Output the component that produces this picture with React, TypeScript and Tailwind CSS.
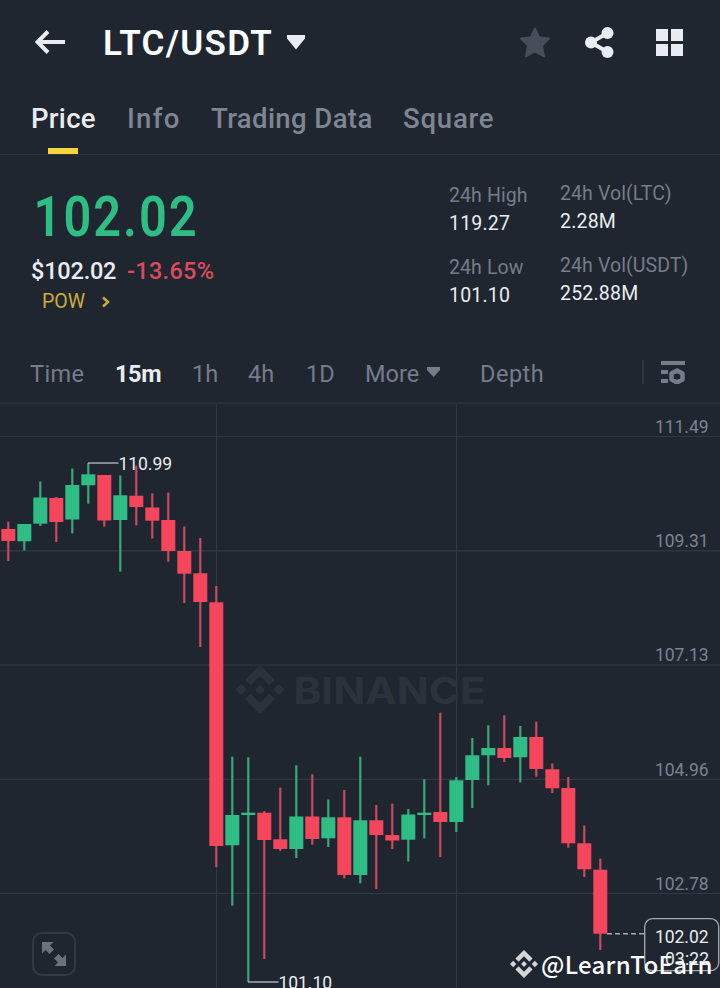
import React from "react";
import clsx from "clsx";


interface ICandle {
    high: number,
    top: number,
    bottom: number,
    low: number,
    up?: boolean,
}

const CANDLES: Array<ICandle> = [
    { high: 521.7, top: 529, bottom: 541, low: 561 },
    { high: 524, top: 524, bottom: 541.3, low: 550.5, up: true },
    { high: 481.5, top: 497.5, bottom: 523.7, low: 526, up: true },
    { high: 497, top: 498, bottom: 522, low: 542 },
    { high: 468.5, top: 485, bottom: 519.5, low: 533.3, up: true },
    { high: 463, top: 474.3, bottom: 485.3, low: 503.7, up: true },
    { high: 475, top: 475, bottom: 520.5, low: 526.7 },
    { high: 475.5, top: 495.3, bottom: 520, low: 571.7, up: true },
    { high: 465.7, top: 495.7, bottom: 507, low: 525.3 },
    { high: 493.3, top: 507.5, bottom: 520.7, low: 538.5 },
    { high: 492.5, top: 520, bottom: 551, low: 561.7 },
    { high: 526.5, top: 551, bottom: 573.7, low: 603 },
    { high: 538, top: 573.3, bottom: 602, low: 647 },
    { high: 586, top: 602.3, bottom: 846, low: 867 },
    { high: 756.7, top: 815, bottom: 845.3, low: 905.7, up: true },
    { high: 757.3, top: 812.7, bottom: 815, low: 982, up: true },
    { high: 811, top: 812.7, bottom: 840, low: 959 },
    { high: 787.7, top: 839.3, bottom: 849, low: 851 },
    { high: 765.3, top: 816.5, bottom: 849, low: 858, up: true },
    { high: 774.3, top: 816.5, bottom: 839, low: 844.7 },
    { high: 799.5, top: 817.3, bottom: 838.3, low: 847, up: true },
    { high: 790, top: 817.3, bottom: 875, low: 878.3 },
    { high: 756.7, top: 820.3, bottom: 875, low: 883.3, up: true },
    { high: 805, top: 820.3, bottom: 835, low: 889 },
    { high: 803.7, top: 835, bottom: 840.5, low: 849 },
    { high: 809, top: 814.5, bottom: 839.7, low: 861.5, up: true },
    { high: 779.3, top: 812.7, bottom: 815, low: 838.3, up: true },
    { high: 712.7, top: 812, bottom: 822, low: 857 },
    { high: 777, top: 780.3, bottom: 822, low: 832, up: true },
    { high: 738, top: 755.3, bottom: 780, low: 808, up: true },
    { high: 725.3, top: 748, bottom: 755.3, low: 785.3, up: true },
    { high: 715.3, top: 748, bottom: 758, low: 762 },
    { high: 726, top: 737, bottom: 757.3, low: 782.5, up: true },
    { high: 721.7, top: 737, bottom: 769, low: 776.7 },
    { high: 763.5, top: 769.3, bottom: 788.3, low: 793 },
    { high: 777, top: 788, bottom: 843.3, low: 847.7 },
    { high: 825.5, top: 843.3, bottom: 869.3, low: 877 },
    { high: 858.7, top: 869.7, bottom: 933.7, low: 950 },
];

const AXIS = [
    { y: 436.5, label: "111.49" },
    { y: 550.8, label: "109.31" },
    { y: 665, label: "107.13" },
    { y: 779.3, label: "104.96" },
    { y: 893.5, label: "102.78" },
];

const TABS = [
    { name: "Price", box: "w-[96px]", text: "text-[#eaecef] tracking-[0.3px]" },
    { name: "Info", box: "w-[84px]", text: "tracking-[1.3px]" },
    { name: "Trading Data", box: "w-[192px]", text: "tracking-[0.4px]" },
    { name: "Square", box: "w-[120px]", text: "tracking-[0.8px]" },
];

const INTERVALS = [
    { name: "Time", box: "w-[85px]", text: "tracking-[0.4px]" },
    { name: "15m", box: "w-[77px]", text: "text-[#eaecef] font-bold tracking-[-0.4px]" },
    { name: "1h", box: "w-[56px]", text: "" },
    { name: "4h", box: "w-[58px]", text: "" },
    { name: "1D", box: "w-[59px]", text: "" },
];

function BinanceLogo(props: React.SVGProps<SVGSVGElement>) {
    return (
        <svg viewBox="0 0 24 24" fill="currentColor" {...props}>
            <path d="M16.62 13.92l2.72 2.72L12 24l-7.36-7.36 2.72-2.72L12 18.58zM21.26 9.28L24 12l-2.72 2.72L18.57 12zM12 9.5l2.5 2.5-2.5 2.5L9.5 12zM2.72 9.28L5.41 12l-2.69 2.69L0 12zM12 0l7.34 7.34-2.72 2.72L12 5.42l-4.64 4.66-2.72-2.72z" />
        </svg>
    )
}

function Header() {
    return (
        <header className="flex items-center h-[84px] pl-[35px] pr-[36px] text-[#eaecf4]">
            <svg className="w-[31px] h-6" viewBox="0 0 31 24" fill="none" stroke="currentColor" strokeWidth="4">
                <path d="M2 12H30M13 1.500L2.500 12L13 22.500" />
            </svg>
            <h1 className="ml-[37px] pt-1 w-[170px] whitespace-nowrap text-[35px] leading-[42px] font-semibold tracking-[1.300px] text-[#fcfdff]">LTC/USDT</h1>
            <svg className="ml-[14px] w-[18px] h-[15px]" viewBox="0 0 18 15" fill="currentColor">
                <path d="M0 0H18V3.500L9 14.500L0 3.500Z" />
            </svg>
            <div className="flex items-center ml-auto">
                <svg className="w-[30px] h-[31px]" viewBox="0 0 30 31" fill="#474d59" stroke="#474d59" strokeWidth="2" strokeLinejoin="round">
                    <path d="M15 1.500L19 10.200L29 11.500L22 18.500L24 29.500L15 24.500L6 29.500L8 18.500L1 11.500L11 10.200Z" />
                </svg>
                <svg className="ml-[35px] w-[29px] h-[31px]" viewBox="0 0 29 31" fill="currentColor">
                    <path d="M22.500 6L6 15.500L22.500 25" fill="none" stroke="currentColor" strokeWidth="4" />
                    <circle cx="22.500" cy="6" r="6" />
                    <circle cx="6" cy="15.500" r="6" />
                    <circle cx="22.500" cy="25" r="6" />
                </svg>
                <svg className="ml-[42px] mr-px w-[27px] h-[27px]" viewBox="0 0 27 27" fill="currentColor">
                    <path d="M0 0H12V12H0zM15 0H27V12H15zM0 15H12V27H0zM15 15H27V27H15z" />
                </svg>
            </div>
        </header>
    )
}

function Tabs() {
    return (
        <nav className="flex h-[71px] pl-[31px] border-b border-[#2e343f] text-[27.500px] font-medium text-[#7f8592]">
            {TABS.map((tab, i) => (
                <div key={tab.name} className={clsx("flex flex-col justify-between whitespace-nowrap", tab.box)}>
                    <span className={clsx("leading-[69px] h-[64px]", tab.text)}>{tab.name}</span>
                    {i === 0 && <div className="ml-[17px] w-[30px] h-1.5 bg-[#f8d33a]" />}
                </div>
            ))}
        </nav>
    )
}

function Stat({ label, value }: { label: string, value: string }) {
    return (
        <div className="h-[72px] whitespace-nowrap">
            <div className="text-[19.500px] leading-[28px] tracking-[0.1px] text-[#767c89]">{label}</div>
            <div className="text-[19.500px] leading-[28px] tracking-[0.2px] text-[#eaecef]">{value}</div>
        </div>
    )
}

function Summary() {
    return (
        <section className="flex h-[190px] pl-[31px]">
            <div className="w-[418px] pt-[27px]">
                <div className="pl-[3px] origin-left scale-x-[0.87] text-[56px] leading-[70px] font-semibold tracking-[2.300px] text-[#2ebd85]">102.02</div>
                <div className="flex text-[23.500px] leading-[38px] font-medium">
                    <span className="w-[96px] tracking-[-0.2px] text-[#eaecef]">$102.02</span>
                    <span className="tracking-[0.3px] text-[#dc4a5f]">-13.65%</span>
                </div>
                <div className="flex items-center gap-[17px] pl-[11px] text-[19.500px] leading-6 text-[#cdab3a]">
                    <span>POW</span>
                    <svg className="w-2 h-3" viewBox="0 0 8 12" fill="none" stroke="currentColor" strokeWidth="2.500">
                        <path d="M1 1.500L6 6L1 10.500" />
                    </svg>
                </div>
            </div>
            <div className="w-[111px] pt-[27px]">
                <Stat label="24h High" value="119.27" />
                <Stat label="24h Low" value="101.10" />
            </div>
            <div className="pt-[25px]">
                <Stat label="24h Vol(LTC)" value="2.28M" />
                <Stat label="24h Vol(USDT)" value="252.88M" />
            </div>
        </section>
    )
}

function Intervals() {
    return (
        <div className="flex items-center h-[59px] pl-[30px] border-b-2 border-[#282e38] text-[23.500px] text-[#767c89] whitespace-nowrap">
            {INTERVALS.map((item) => (
                <span key={item.name} className={clsx("pt-0.5", item.box, item.text)}>{item.name}</span>
            ))}
            <span className="pt-0.5 w-[62px]">More</span>
            <svg className="mb-1 w-[13px] h-2.5" viewBox="0 0 13 10" fill="currentColor">
                <path d="M0 0H13V3L6.500 10L0 3Z" />
            </svg>
            <span className="pt-0.5 ml-[40px] w-[162px] tracking-[0.5px]">Depth</span>
            <div className="mb-1 w-0.5 h-6 bg-[#2f3641]" />
            <svg className="mb-1 ml-[17px] w-6 h-6" viewBox="0 0 24 24" fill="currentColor">
                <path d="M0 1H24V5H0zM0 10H7V14H0zM0 19H7V23H0z" />
                <path d="M16 10.500L21.500 13.500V19.500L16 22.500L10.500 19.500V13.500Z" fill="none" stroke="currentColor" strokeWidth="4.500" strokeLinejoin="round" />
            </svg>
        </div>
    )
}

function Chart() {
    return (
        <svg className="block w-[720px] h-[584px]" viewBox="0 404 720 584">
            <g stroke="#313842" strokeWidth="1.200">
                {AXIS.map(({ y }) => <path key={y} d={`M0 ${y}H720`} />)}
                <path d="M216.500 404V988M456.500 404V988" />
            </g>

            <g fill="#2c323c">
                <BinanceLogo x="235.500" y="665" width="49" height="49" color="#2c323c" />
                <text x="293.500" y="703.500" fontSize="37.500" fontWeight="700" textLength="192" lengthAdjust="spacingAndGlyphs" className="font-['Inter',sans-serif]">BINANCE</text>
            </g>

            {CANDLES.map((candle, i) => {
                const x = 8.3 + i * 16;
                return (
                    <g key={i}>
                        <rect x={x - 1.1} y={candle.high} width="2.200" height={candle.low - candle.high} fill={candle.up ? "#3aa77c" : "#c94b5f"} />
                        <rect x={x - 7} y={candle.top} width="14" height={candle.bottom - candle.top} fill={candle.up ? "#2ebd85" : "#f6465d"} />
                    </g>
                )
            })}

            <g fill="none" stroke="#a5a9b1" strokeWidth="1.500">
                <path d="M88 463H118.500M248 982H278.500" />
                <path d="M607 933.700H644" strokeDasharray="5 3" />
            </g>
            <g fill="#eaecef" fontSize="17.500">
                <text x="118.500" y="470" textLength="53.500">110.99</text>
                <text x="278.500" y="989" textLength="53.500">101.10</text>
            </g>
            <g fill="#7c828f" fontSize="17.500">
                {AXIS.map(({ y, label }) => <text key={label} x="655" y={y - 3.8} textLength="53.500">{label}</text>)}
            </g>

            <rect x="644.700" y="918.700" width="74" height="52" rx="8" fill="#1f2630" stroke="#a5a9b1" strokeWidth="1.300" />
            <g fill="#eaecef" fontSize="17.500">
                <text x="655" y="943" textLength="53.500">102.02</text>
                <text x="665" y="965" textLength="44">03:22</text>
            </g>
        </svg>
    )
}

export default function App() {
    return (
        <main className="relative w-[720px] h-[988px] overflow-hidden bg-[#1f2630] font-['Roboto',sans-serif]">
            <Header />
            <Tabs />
            <Summary />
            <Intervals />
            <Chart />
            <button className="absolute left-8 bottom-3 flex items-center justify-center w-11 h-11 rounded-[10px] border-2 border-[#333a45] text-[#6b717d]">
                <svg className="w-6 h-6" viewBox="0 0 24 24" fill="currentColor">
                    <path d="M0 0H11.500L8 3.500L12 7.500L7.500 12L3.500 8L0 11.500zM24 24H12.500L16 20.500L12 16.500L16.500 12L20.500 16L24 12.500z" />
                </svg>
            </button>
            <div className="absolute left-[510px] bottom-[8px] flex items-center gap-[3px] h-8 whitespace-nowrap text-white">
                <BinanceLogo className="w-7 h-7 text-[#d4d6da]" />
                <span className="text-[24px] leading-8 font-medium tracking-[0.3px] font-['Noto_Sans_CJK_SC',sans-serif]">@LearnToEarn</span>
            </div>
        </main>
    )
}
